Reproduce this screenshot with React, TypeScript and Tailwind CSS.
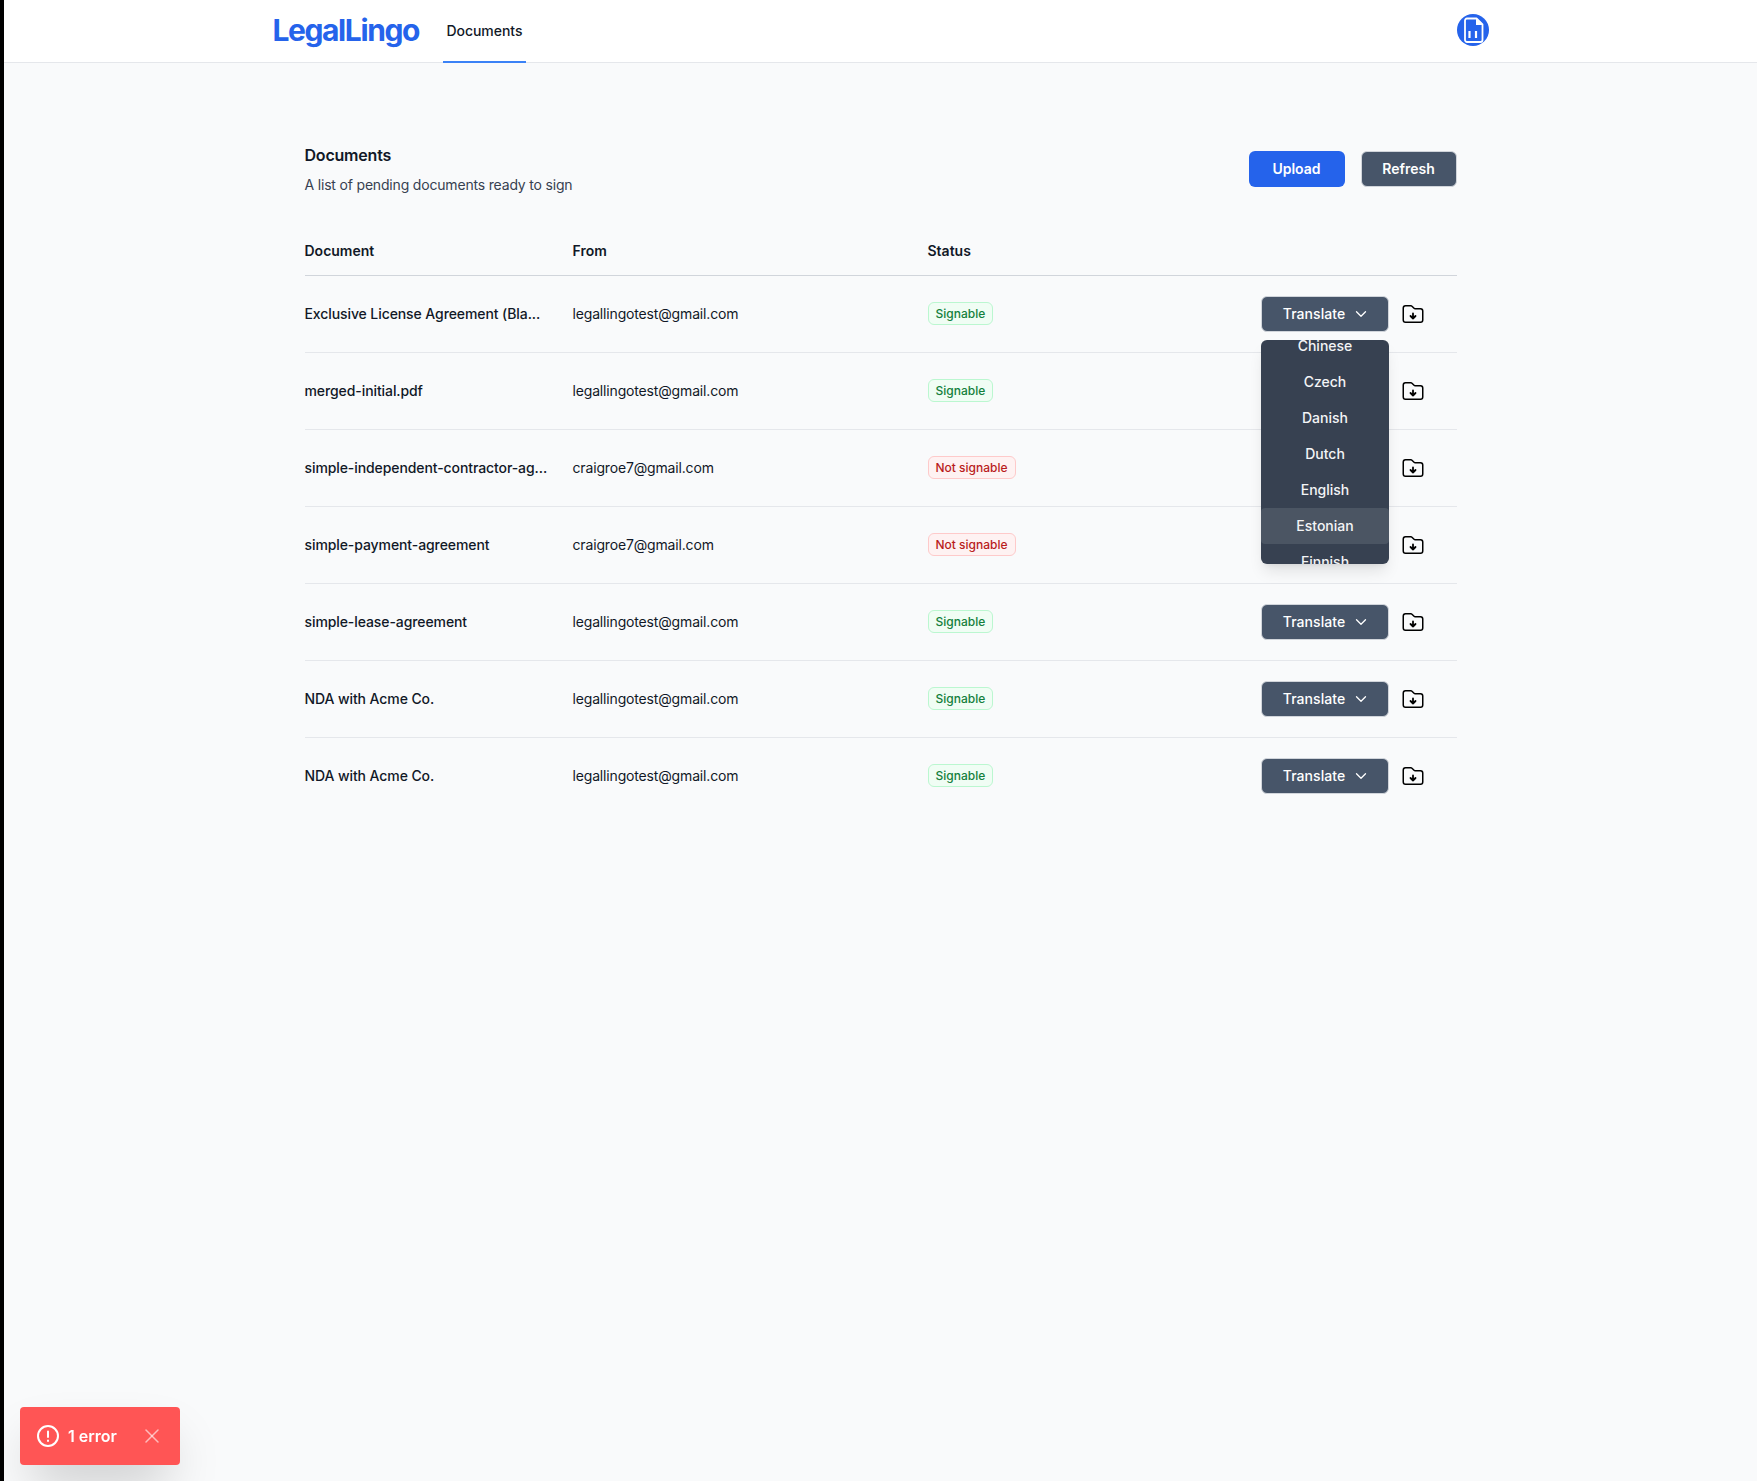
import React from 'react';
import { ChevronDown, X } from 'lucide-react';

type Doc = { name: string; from: string; signable: boolean; open?: boolean };

const docs: Doc[] = [
  { name: 'Exclusive License Agreement (Bla...', from: 'legallingotest@gmail.com', signable: true, open: true },
  { name: 'merged-initial.pdf', from: 'legallingotest@gmail.com', signable: true },
  { name: 'simple-independent-contractor-ag...', from: 'craigroe7@gmail.com', signable: false },
  { name: 'simple-payment-agreement', from: 'craigroe7@gmail.com', signable: false },
  { name: 'simple-lease-agreement', from: 'legallingotest@gmail.com', signable: true },
  { name: 'NDA with Acme Co.', from: 'legallingotest@gmail.com', signable: true },
  { name: 'NDA with Acme Co.', from: 'legallingotest@gmail.com', signable: true },
];

const languages = ['Chinese', 'Czech', 'Danish', 'Dutch', 'English', 'Estonian', 'Finnish'];

const FolderDownload = () => (
  <svg viewBox="0 0 24 24" fill="none" stroke="currentColor" strokeWidth={1.5} strokeLinecap="round" strokeLinejoin="round" className="h-6 w-6 text-black">
    <path d="M13.060 6.310l-2.120-2.120a1.500 1.500 0 0 0-1.061-.44H4.500A2.250 2.250 0 0 0 2.250 6v12a2.250 2.250 0 0 0 2.250 2.250h15A2.250 2.250 0 0 0 21.750 18V9a2.250 2.250 0 0 0-2.250-2.250h-5.379a1.500 1.500 0 0 1-1.060-.44Z" />
    <path d="M9.500 14l2.500 2.500 2.500-2.500M12 16.500V11.500" strokeWidth={1.8} />
  </svg>
);

const DocAvatar = () => (
  <svg viewBox="0 0 32 32" className="h-8 w-8">
    <circle cx="16" cy="16" r="16" fill="#2563eb" />
    <path d="M10 4.500h9.500l6 6v15.500a2 2 0 0 1-2 2H10a2 2 0 0 1-2-2V6.500a2 2 0 0 1 2-2Z" fill="none" stroke="#fff" strokeWidth="1.800" strokeLinejoin="round" />
    <path d="M19 4.500v6.500h6.500Z" fill="#fff" />
    <path d="M12.500 17v7M19 17v7" stroke="#fff" strokeWidth="2.200" />
  </svg>
);

const TranslateMenu = ({ open }: { open?: boolean }) => (
  <div className="relative">
    <button className="flex h-9 w-[128px] items-center justify-center gap-[7px] rounded-md border border-[#d1d5db] bg-[#475569] pl-1 text-sm font-medium tracking-[0.05px] text-white">
      Translate
      <ChevronDown className="h-[18px] w-[18px]" strokeWidth={1.75} />
    </button>
    {open && (
      <div className="absolute left-0 top-full z-10 mt-2 h-[224px] w-[128px] overflow-hidden rounded-md bg-[#374151] shadow-lg">
        <div className="-mt-3">
          {languages.map((lang) => (
            <div
              key={lang}
              className={`flex h-9 items-center justify-center pl-px text-sm font-medium text-[#f3f4f6] ${lang === 'Estonian' ? 'rounded-sm bg-[#4b5563]' : ''}`}
            >
              {lang}
            </div>
          ))}
        </div>
      </div>
    )}
  </div>
);

const StatusBadge = ({ signable }: { signable: boolean }) => (
  <span
    className={`inline-flex h-[23px] items-center rounded-md border px-[7px] text-xs font-medium ${
      signable ? 'border-[#bbf7d0] bg-[#f0fdf4] text-[#15803d]' : 'border-[#fecaca] bg-[#fef2f2] text-[#b91c1c]'
    }`}
  >
    {signable ? 'Signable' : 'Not signable'}
  </span>
);

export default function App() {
  return (
    <div className="flex min-h-screen bg-black font-[Inter,sans-serif]">
      <div className="ml-1 min-h-screen min-w-0 flex-1 bg-[#f9fafb]">
        {/* Top nav */}
        <header className="h-[63px] border-b border-[#e5e7eb] bg-white">
          <div className="mx-auto flex h-full max-w-7xl items-center justify-between px-8">
            <div className="flex h-full items-center">
              <span className="-mt-px w-[145px] text-[30px] font-bold tracking-[-1.4px] text-[#2563eb]">LegalLingo</span>
              <a className="-mb-px ml-[25px] flex h-[63px] items-center border-b-2 border-[#3b82f6] px-1 text-sm font-medium tracking-[-0.05px] text-[#111827]">
                Documents
              </a>
            </div>
            <div className="-mt-0.5">
              <DocAvatar />
            </div>
          </div>
        </header>

        <main className="mx-auto max-w-6xl pt-[80px]">
          <div className="flex items-center justify-between">
            <div>
              <h1 className="text-base font-semibold tracking-[-0.2px] text-[#111827]">Documents</h1>
              <p className="mt-2 text-sm tracking-[-0.18px] text-[#374151]">A list of pending documents ready to sign</p>
            </div>
            <div className="flex gap-4">
              <button className="h-9 w-24 rounded-md bg-[#2563eb] text-sm font-semibold text-white">Upload</button>
              <button className="h-9 w-24 rounded-md border border-[#d1d5db] bg-[#475569] text-sm font-semibold text-white">Refresh</button>
            </div>
          </div>

          <table className="mt-8 w-full table-fixed border-collapse text-left text-sm">
            <thead>
              <tr className="h-12 border-b border-[#d1d5db]">
                <th className="w-[268px] font-semibold text-[#111827]">Document</th>
                <th className="w-[355px] font-semibold text-[#111827]">From</th>
                <th className="w-[300px] font-semibold text-[#111827]">Status</th>
                <th />
              </tr>
            </thead>
            <tbody className="divide-y divide-[#e5e7eb]">
              {docs.map((doc, i) => (
                <tr key={i} className="h-[77px]">
                  <td className="font-medium tracking-[-0.09px] text-[#111827]">{doc.name}</td>
                  <td className="tracking-[-0.16px] text-[#111827]">{doc.from}</td>
                  <td><StatusBadge signable={doc.signable} /></td>
                  <td>
                    <div className="flex items-center justify-end gap-3 pr-8">
                      <TranslateMenu open={doc.open} />
                      <FolderDownload />
                    </div>
                  </td>
                </tr>
              ))}
            </tbody>
          </table>
        </main>
      </div>

      {/* Error toast */}
      <div className="fixed bottom-[16px] left-5 flex h-[58px] w-[160px] items-center gap-2 rounded bg-[#ff5555] pl-[16px] text-white shadow-2xl">
        <svg viewBox="0 0 24 24" fill="none" stroke="currentColor" strokeWidth={2} strokeLinecap="round" className="h-6 w-6 shrink-0">
          <circle cx="12" cy="12" r="10" />
          <path d="M12 7.500v5.500M12 16.500v.5" />
        </svg>
        <span className="text-base font-semibold">1 error</span>
        <X className="ml-[15px] h-6 w-6 text-white/60" strokeWidth={1.5} />
      </div>
    </div>
  );
}
